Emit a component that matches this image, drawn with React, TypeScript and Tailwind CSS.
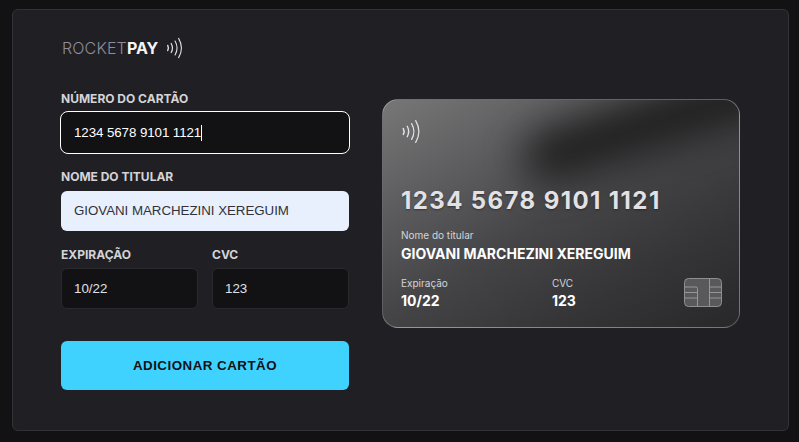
import React from "react";

const sans = "font-['Inter',sans-serif]";

// contactless waves, used on the logo and on the card
const Waves = ({ className }: { className: string }) => (
    <svg className={className} viewBox="0 0 18 24" fill="none" stroke="currentColor" strokeLinecap="round">
        <path d="M1.600 9.200c.9 1.700.9 3.900 0 5.600" strokeWidth="1.500" />
        <path d="M5.400 7c1.700 3.100 1.700 6.900 0 10" strokeWidth="1.300" />
        <path d="M9.600 4.400c2.700 4.700 2.700 10.500 0 15.200" strokeWidth="1.200" />
        <path d="M13.500 1.500c3.800 6.500 3.800 14.500 0 21" strokeWidth="1.200" />
    </svg>
);

const Chip = () => (
    <svg className="h-[29px] w-[38px]" viewBox="0 0 38 29" fill="none">
        <rect x="0.500" y="0.500" width="37" height="28" rx="4" fill="#59595c" stroke="#8f8f91" />
        <path d="M1 9h11a1.500 1.500 0 0 1 1.500 1.500V28M25.500 1v27M25.500 9H37M25.500 14.500H37M25.500 20H37M1 14.500h12.500M1 20h12.500" stroke="#979799" />
    </svg>
);

const Field = ({ label, value, className }: { label: string; value: string; className?: string }) => (
    <div className={className}>
        <div className="text-[12px] leading-[15px] font-bold text-[#d4d4d8]">{label}</div>
        <div className="mt-[6px] flex h-[41px] items-center rounded-[6px] border border-[#29292e] bg-[#121214] px-[12px] font-['Liberation_Sans',sans-serif] text-[13.33px] text-[#e1e1e6]">
            {value}
        </div>
    </div>
);

export default function App() {
    return (
        <div className={`h-[442px] w-[799px] overflow-hidden bg-[#121214] pt-[9px] pr-[10px] pb-[11px] pl-[12px] ${sans}`}>
            <div className="flex h-full flex-col rounded-[6px] border border-[#323238] bg-[#202024] pt-[26px] pr-[48px] pl-[48px]">
                {/* Logo */}
                <div className="flex h-[24px] items-center pl-[1px]">
                    <span className="text-[16px] font-light tracking-[0.15px] text-[#8d8d99]">ROCKET</span>
                    <span className="text-[16px] font-bold text-[#f4f4f5]">PAY</span>
                    <Waves className="ml-[7px] h-[22px] w-[19px] text-[#e1e1e6]" />
                </div>

                <div className="mt-[31px] flex items-start gap-[33px]">
                    {/* Form */}
                    <div className="flex w-[288px] flex-col">
                        <div>
                            <div className="text-[12px] leading-[15px] font-bold text-[#d4d4d8]">NÚMERO DO CARTÃO</div>
                            <div className="-mx-px mt-[5px] flex h-[43px] items-center rounded-[8px] border border-white bg-[#121214] px-[13px] font-['Liberation_Sans',sans-serif] text-[13.33px] tracking-[-0.08px] text-white">
                                1234 5678 9101 1121
                                <span className="h-[16px] w-px bg-white" />
                            </div>
                        </div>
                        <div className="mt-[15px]">
                            <div className="text-[12px] leading-[15px] font-bold text-[#d4d4d8]">NOME DO TITULAR</div>
                            <div className="mt-[7px] flex h-[40px] items-center rounded-[6px] bg-[#e8f0fe] px-[13px] font-['Liberation_Sans',sans-serif] text-[13.33px] tracking-[-0.04px] text-[#323238]">
                                GIOVANI MARCHEZINI XEREGUIM
                            </div>
                        </div>
                        <div className="mt-[16px] flex gap-[14px]">
                            <Field label="EXPIRAÇÃO" value="10/22" className="flex-1" />
                            <Field label="CVC" value="123" className="flex-1" />
                        </div>
                        <button className="mt-[32px] h-[49px] rounded-[6px] bg-[#3fd2ff] font-['Liberation_Sans',sans-serif] text-[13.33px] font-bold tracking-[0.5px] text-[#121214]">
                            ADICIONAR CARTÃO
                        </button>
                    </div>

                    {/* Card preview */}
                    <div className="relative mt-[8px] h-[229px] w-[358px] overflow-hidden rounded-[16px] border border-[#ffffff40] bg-[linear-gradient(150deg,#777777_0%,#5e5e60_25%,#454548_50%,#353538_75%,#28282b_100%)]">
                        {/* dark reflection across the glass */}
                        <div className="absolute top-[-2px] left-[135px] h-[50px] w-[270px] -rotate-[18deg] rounded-full bg-[#1c1c1c] blur-[20px]" />
                        <div className="relative flex h-full flex-col pt-[19px] pr-[17px] pl-[18px]">
                            <Waves className="h-[25px] w-[20px] text-[#e1e1e6]" />
                            <div className="mt-[42px] text-[24px] leading-[30px] font-bold tracking-[1.4px] text-[#e1e1e6] [text-shadow:0_1px_2px_#00000066]">
                                1234 5678 9101 1121
                            </div>
                            <div className="mt-[12px] text-[10px] leading-[14px] text-[#d4d4d8]">Nome do titular</div>
                            <div className="mt-[3px] text-[14px] leading-[18px] font-bold text-white">GIOVANI MARCHEZINI XEREGUIM</div>
                            <div className="mt-[13px] flex items-end">
                                <div className="w-[151px]">
                                    <div className="text-[10px] leading-[14px] text-[#d4d4d8]">Expiração</div>
                                    <div className="mt-[2px] text-[14px] leading-[18px] font-bold text-white">10/22</div>
                                </div>
                                <div>
                                    <div className="text-[10px] leading-[14px] text-[#d4d4d8]">CVC</div>
                                    <div className="mt-[2px] text-[14px] leading-[18px] font-bold text-white">123</div>
                                </div>
                                <div className="mb-[3px] ml-auto">
                                    <Chip />
                                </div>
                            </div>
                        </div>
                    </div>
                </div>
            </div>
        </div>
    );
}
